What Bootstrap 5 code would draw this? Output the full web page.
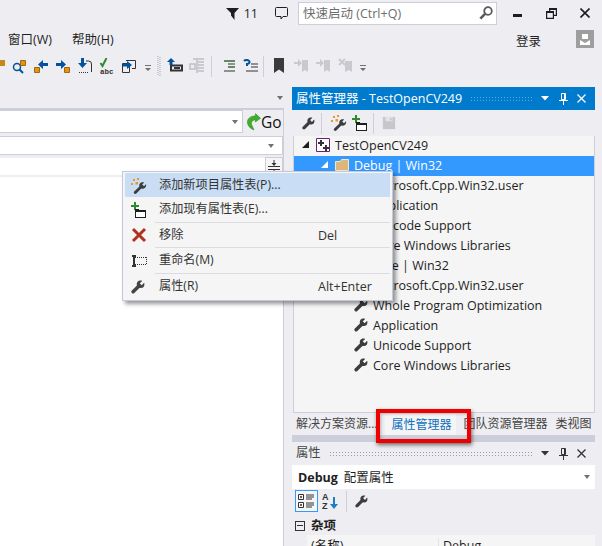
<!DOCTYPE html>
<html lang="zh">
<head>
<meta charset="utf-8">
<title>属性管理器</title>
<link href="https://cdn.jsdelivr.net/npm/bootstrap@5.3.0/dist/css/bootstrap.min.css" rel="stylesheet">
<style>
html,body{width:602px;height:546px;overflow:hidden;margin:0}
body{background:#eeeef2;color:#1e1e1e;font:12.5px/1.2 "Open Sans","Noto Sans CJK SC",sans-serif}
.vs-app{width:602px;height:546px;position:relative;overflow:hidden}
.vs-title{height:26px}
.vs-quick{width:199px;height:23px;background:#fff;border:1px solid #ccced8;color:#6d6d6d;padding:0 2px 0 4px;margin-left:9px;flex:none}
.vs-win{width:105px;padding-left:16px;gap:25px;flex:none}
.vs-win svg{flex:none}
.vs-win svg+svg{margin-left:-2px}
.vs-menu{height:26px;padding-left:8px}
.vs-menu span.mi{width:64px}
.vs-login{margin-left:auto;margin-right:35px;position:relative;top:2px}
.vs-avatar{width:18px;height:18px;background:#9e9e9e;margin-right:8px}
.vs-tools{height:33px;gap:6px;margin-left:-11px;padding-bottom:5px}
.vs-tools svg{flex:none;width:16px;height:16px}
.vs-tools svg.nar{width:6px;height:16px;margin-top:6px;margin-left:2px}
.vs-tools svg.grip{width:4px;height:20px}
.vs-tools svg.after-mark{margin-left:1px}
.vs-tools svg.last{margin-left:0}
.vs-sep{width:1px;height:21px;background:#cccedb;flex:none}
.vs-tools .s1{margin-right:3px}
.vs-tools .s2{margin-left:-2px;margin-right:1px}
.vs-main{height:461px}
.vs-left{width:292px;flex:none;position:relative}
.vs-right{width:303px;flex:none;margin-right:7px;padding-top:2px}
.vs-drop{height:23px;padding:2px 9px 0 0;justify-content:flex-end}
.vs-doc{width:284px;height:438px;background:#eeeef2;border-top:2px solid #cccedb;border-right:1px solid #cccedb}
.vs-row{height:23px;margin-bottom:3px}
.vs-combo{background:#fff;border:1px solid #cccedb;border-left:0}
.vs-go{width:40px;flex:none;padding-left:4px;font-size:15.5px;color:#111;line-height:20px}
.vs-go svg{flex:none}
.vs-row2{height:19px;margin-bottom:3px}
.vs-row3{height:17px;position:relative;padding-right:18px}
.vs-row3 .vs-w{background:#fff;height:17px}
.vs-split{position:absolute;right:0;top:-1px;width:18px;height:19px;border:1px solid #cccedb;background:#f5f5f5}
.vs-white{background:#fff;height:400px;border-top:2px solid #eeeeee}
.vs-arrow{width:0;height:0;border-left:3.5px solid transparent;border-right:3.5px solid transparent;border-top:4px solid #717171}
.vs-head{height:23px;background:#007acc;color:#fff;padding:0 5px 0 4px;font-size:12.5px}
.vs-dots{flex:1;height:5px;margin:0 8px;background-image:radial-gradient(#5aa9dd 0.7px,transparent .8px);background-size:3px 3px}
.vs-hchev{margin-right:10px}
.vs-hpin{margin-right:9px}
.vs-hx{margin-right:4px}
.vs-ptools{height:26px;padding-left:10px;gap:4px;background:#eeeef2}
.vs-ptools .m1{margin-left:2px}
.vs-ptools .m2{margin-left:5px}
.vs-ptools .m3{margin-left:1px}
.vs-ptools .m4{margin-left:4px}
.vs-tree{height:277px;background:#f5f5f5;border:solid #cccedb;border-width:0 1px 1px;font-size:12.5px;margin-left:1px}
.vs-node{height:20px;color:#1e1e1e;white-space:nowrap;padding-bottom:2px}
.vs-node svg{flex:none}
.vs-node .tw{width:14px;height:14px;margin-right:5px;color:#3c3c3c}
.vs-node .ta{margin-right:6px}
.vs-node .tb{margin-right:4px}
.vs-l0{padding-left:8px}
.vs-l1{padding-left:27px}
.vs-l2{padding-left:60px}
.vs-l1b{padding-left:60px}
.vs-node.sel{background:#3399ff;color:#fff}
.vs-tabs{height:22px;font-size:12px;color:#444;padding-left:4px}
.vs-tabs span{white-space:nowrap}
.vs-tab-on{color:#0e70c0;background:#f5f5f5;padding:0 6px;height:21px;line-height:21px;margin:0 7px 0 8px;width:71px;flex:none}
.vs-stripe{height:7px;background:#cccedb}
.vs-head2{height:23px;color:#444;padding:0 5px 0 4px;font-size:12.3px;background:#eeeef2}
.vs-head2 .vs-dots{background-image:radial-gradient(#9a9cab .7px,transparent .8px)}
.vs-pcombo{height:24px;background:#fff;padding:0 5px 0 6px;font-weight:700;font-size:12.5px;color:#1e1e1e}
.vs-pcombo em{font-style:normal;font-weight:400;margin-left:6px}
.vs-ptools2{height:24px;padding-left:3px;gap:4px}
.vs-boxed{width:23px;height:22px;border:1px solid #3399ff;background:#f5f5f5}
.vs-ptools2 .az{margin-left:0}
.vs-ptools2 .sp{margin:0 4px}
.vs-cat{height:22px;font-weight:700;padding:3px 0 0 3px;font-size:12.5px}
.vs-cat i{display:block;width:10px;height:10px;border:1px solid #333;position:relative;margin-right:6px}
.vs-cat i::after{content:"";position:absolute;left:1px;right:1px;top:3px;height:1px;background:#333}
.vs-grid{height:20px;background:#f5f5f5;margin-left:15px;color:#1e1e1e;padding-top:3px}
.vs-grid div:first-child{width:132px;border-right:1px solid #e2e2e2;padding-left:4px}
.vs-grid div+div{padding-left:4px}
.vs-ctx{position:absolute;left:122px;top:171px;width:271px;height:130px;background:#f5f5f5;border:1px solid #c5c7dc;box-shadow:3px 3px 4px rgba(0,0,0,.4);padding:1px 2px;font-size:12.2px;color:#333}
.vs-item{height:24px;padding:1px 0 0 6px;position:relative}
.vs-item.on{background:#c9def5}
.vs-item.short{height:23px}
.vs-item .ic{width:28px;flex:none;display:flex}
.vs-item .kb{position:absolute;left:193px;font-size:12.5px}
.vs-ctx hr{margin:1px 0 0 30px;border:0;border-top:1px solid #dcdce0;opacity:1}
.vs-red{position:absolute;left:376px;top:409px;width:95px;height:34px;border:4px solid #ee0000;box-shadow:1px 2px 4px rgba(0,0,0,.55),inset 1px 1px 3px rgba(0,0,0,.25)}
</style>
</head>
<body>
<svg width="0" height="0" class="position-absolute">
<defs>
<symbol id="wr" viewBox="0 0 16 16"><path fill="currentColor" d="M15 3.200 12.200 6 10 3.800 12.800 1C10.600.2 8 .9 7 2.800c-.6 1.100-.6 2.300-.2 3.400L1 12c-.8.800-.8 2 0 2.800s2 .8 2.800 0l5.800-5.800c1.700.6 3.600.2 4.800-1 1-1.200 1.200-3.300.6-4.800z"/></symbol>
<symbol id="wrs" viewBox="0 0 16 16"><path fill="#3c3c3c" d="M15 6.200 13 8.200 11.200 6.500 13.200 4.500c-1.800-.7-3.800-.1-4.600 1.500-.4.800-.5 1.700-.2 2.600L3.200 13.400c-.6.700-.6 1.500 0 2.100s1.500.6 2.100 0l5-5c1.300.5 2.900.1 3.800-.8.900-1 1.400-2.300.9-3.500z"/><path fill="#e69a2e" d="M2 1h2v2H2zM6 0h2v2H6zM0 5h2v2H0zM4.500 4H7v2.500H4.500z"/></symbol>
<symbol id="addp" viewBox="0 0 16 16"><path fill="#2f8a2f" d="M3 0h2v3h3v2H5v3H3V5H0V3h3z"/><path fill="#1e1e1e" d="M4 7h4v1h7v8H4zm1 3v5h9v-5z"/><path fill="#fff" d="M5 10h9v5H5z"/></symbol>
<symbol id="chev" viewBox="0 0 6 16"><path fill="#717171" d="M0 4h6v1H0zM0 7h6l-3 3z"/></symbol>
<symbol id="bl" viewBox="0 0 16 16"><path fill="#e8930c" stroke="#9a6a1a" d="M1.500 9.500h5v5h-5z"/><path fill="#00539c" d="M10 2v3h5v3h-5v3L5 6.500z"/></symbol>
<symbol id="br" viewBox="0 0 16 16"><path fill="#e8930c" stroke="#9a6a1a" d="M9.500 9.500h5v5h-5z"/><path fill="#00539c" d="M6 2v3H1v3h5v3l5-4.500z"/></symbol>
</defs>
</svg>
<div class="vs-app">
  <div class="vs-title d-flex justify-content-end align-items-center">
    <svg width="14" height="14" viewBox="0 0 14 14"><path fill="#1e1e1e" d="M0 2h13L8.500 7v7L5 9.500 5 7z"/></svg>
    <span class="ms-1 me-3">11</span>
    <svg width="15" height="15" viewBox="0 0 15 15"><path fill="none" stroke="#1e1e1e" d="M2.500 1.500h10a1 1 0 0 1 1 1v7a1 1 0 0 1-1 1H9l-2 2.500V10.500H2.500a1 1 0 0 1-1-1v-7a1 1 0 0 1 1-1z"/></svg>
    <div class="vs-quick d-flex align-items-center justify-content-between">
      <span>快速启动 (Ctrl+Q)</span>
      <svg width="16" height="16" viewBox="0 0 16 16"><circle cx="10" cy="6" r="3.800" fill="none" stroke="#5a5a5a" stroke-width="1.800"/><path stroke="#5a5a5a" stroke-width="2.600" d="m7.300 8.700-5 5"/></svg>
    </div>
    <div class="vs-win d-flex align-items-center">
      <svg width="10" height="10" viewBox="0 0 10 10"><path fill="#1e1e1e" d="M0 6h9v3H0z"/></svg>
      <svg width="11" height="11" viewBox="0 0 11 11"><path fill="none" stroke="#1e1e1e" stroke-width="1.200" d="M.6 3.600h6.800v6.800H.6zM3.600 3.500V.6h6.800v6.800H7.500"/><path stroke="#1e1e1e" stroke-width="1.500" d="M.6 4.300h6.800M3.600 1.300h6.800"/></svg>
      <svg width="10" height="10" viewBox="0 0 10 10"><path stroke="#1e1e1e" stroke-width="1.600" d="m.5.500 9 9m0-9-9 9"/></svg>
    </div>
  </div>
  <div class="vs-menu d-flex align-items-center">
    <span class="mi">窗口(W)</span><span class="mi">帮助(H)</span>
    <span class="vs-login">登录</span>
    <svg class="vs-avatar" viewBox="0 0 18 18"><path fill="#fff" d="M6 4h6v5H6zM4 10l5 3 5-3v5H4z"/></svg>
  </div>
  <div class="vs-tools d-flex align-items-center">
    <svg viewBox="0 0 16 16"><path fill="#c8861b" d="M8 2h8v6H8z"/></svg>
    <svg viewBox="0 0 16 16"><circle cx="6" cy="9" r="3.500" fill="none" stroke="#00539c" stroke-width="1.500"/><path stroke="#00539c" stroke-width="2" d="m8.500 11.500 3.500 3.500"/><path fill="#e8930c" stroke="#9a6a1a" d="M9.500 2.500h5v5h-5z"/></svg>
    <svg viewBox="0 0 16 16"><use href="#bl"/></svg>
    <svg viewBox="0 0 16 16"><use href="#br"/></svg>
    <svg viewBox="0 0 16 16"><path fill="#00539c" d="M4 0h3v5h3l-4.500 5L1 5h3z"/><path fill="none" stroke="#333" stroke-dasharray="1 1" d="M2 14.500h10"/><path fill="none" stroke="#333" d="M9 3h2.500a3 3 0 0 1 3 3v8"/></svg>
    <svg viewBox="0 0 16 16"><path fill="none" stroke="#2f8a2f" stroke-width="2" d="m1.500 5 2 3L7.500 0"/><text x="1" y="15.500" font-size="7.500" font-family="Liberation Mono" font-weight="700" fill="#333">abc</text></svg>
    <svg viewBox="0 0 16 16"><path fill="none" stroke="#333" d="M5 2.500h4l5.500 0v8H11M1.500 5.500h7v9h-7z"/><path fill="#00539c" d="M6 3v2.500H2v3h4V11l5-4z"/></svg>
    <svg class="nar"><use href="#chev"/></svg>
    <svg class="grip" viewBox="0 0 4 20"><path stroke="#a5a7b5" stroke-dasharray="1 1" d="M1 0v20M3 1v19"/></svg>
    <svg viewBox="0 0 16 16"><path fill="none" stroke="#333" stroke-width="2" d="M4 7.500h11v5H4z"/><path fill="#333" d="M7 9h6v2H7z"/><path fill="#00539c" d="M4 0 0 4h2.500v3h3V4H8z"/></svg>
    <svg viewBox="0 0 16 16"><path fill="none" stroke="#bdbdc4" stroke-width="1.500" d="M1 6h5v5H1zM4 1h11M9 4h6M9 7h6M9 10h6M9 13h6M8 2v13"/></svg>
    <span class="vs-sep s1"></span>
    <svg viewBox="0 0 16 16"><path fill="none" stroke="#333" d="M3 3h11M7 6h7M7 9h7M3 13h11"/><path stroke="#2f8a2f" d="M3 3h11M7 9h7"/></svg>
    <svg viewBox="0 0 16 16"><path fill="none" stroke="#333" d="M8 6h7M8 9h7M3 13h12"/><path fill="none" stroke="#00539c" stroke-width="2" d="M1 3a3 2 0 1 1 3 3v2"/></svg>
    <span class="vs-sep s2"></span>
    <svg viewBox="0 0 16 16"><path fill="#3a3a3a" d="M3 0h10v15l-5-3.500L3 15z"/></svg>
    <svg viewBox="0 0 16 16" class="after-mark"><path fill="#c9c9cf" d="M8 2h6v12l-3-2-3 2z"/><path fill="#c9c9cf" d="M0 4h4V1l4 4-4 4V6H0z"/></svg>
    <svg viewBox="0 0 16 16"><path fill="#c9c9cf" d="M8 2h6v12l-3-2-3 2z"/><path fill="#c9c9cf" d="M0 4h4V1l4 4-4 4V6H0z"/></svg>
    <svg viewBox="0 0 16 16"><path fill="#c9c9cf" d="M7 3h7v11l-3-2-4 2z"/><path stroke="#c9c9cf" stroke-width="2" d="m1 1 6 6m0-6-6 6"/></svg>
    <svg class="nar last"><use href="#chev"/></svg>
  </div>
  <div class="vs-main d-flex">
    <div class="vs-left">
      <div class="vs-drop d-flex align-items-center"><span class="vs-arrow"></span></div>
      <div class="vs-doc">
        <div class="vs-row d-flex">
          <div class="vs-combo flex-grow-1 d-flex align-items-center justify-content-end pe-1"><span class="vs-arrow"></span></div>
          <div class="vs-go d-flex align-items-center">
            <svg width="14" height="20" viewBox="0 0 15 20"><path fill="#3fae2a" stroke="#2b8a1c" stroke-width=".6" d="M9 1l5.500 5L9 10V7.500C5.500 8 4 10 5 13l2.500 5.500C3 17 .5 13.500.5 10 .5 6 4 3.500 9 3.500z"/></svg>
            <span>Go</span>
          </div>
        </div>
        <div class="vs-row2"><div class="vs-combo h-100 d-flex align-items-center justify-content-end pe-2"><span class="vs-arrow"></span></div></div>
        <div class="vs-row3"><div class="vs-w"></div>
          <div class="vs-split d-flex align-items-center justify-content-center">
            <svg width="12" height="14" viewBox="0 0 12 14"><path stroke="#333" d="M0 6.500h12M0 9.500h12M6 0v4M6 12v2"/><path fill="#333" d="M3.500 3h5L6 6zM3.500 13h5L6 10z"/></svg>
          </div>
        </div>
        <div class="vs-white"></div>
      </div>
    </div>
    <div class="vs-right">
      <div class="vs-head d-flex align-items-center">
        <span class="text-nowrap">属性管理器 - TestOpenCV249</span>
        <span class="vs-dots"></span>
        <svg width="8" height="5" viewBox="0 0 8 5" class="vs-hchev"><path fill="#fff" d="M0 0h8L4 4.500z"/></svg>
        <svg width="9" height="12" viewBox="0 0 9 12" class="vs-hpin"><path fill="none" stroke="#fff" d="M2.500.5h4v6h-4z"/><path stroke="#fff" d="M0 7.500h9M4.500 8v4M5.500 1v5"/></svg>
        <svg width="9" height="9" viewBox="0 0 9 9" class="vs-hx"><path stroke="#fff" stroke-width="1.300" d="m.5.500 8 8m0-8-8 8"/></svg>
      </div>
      <div class="vs-ptools d-flex align-items-center">
        <svg width="13" height="13" color="#3c3c3c"><use href="#wr"/></svg>
        <span class="vs-sep m1"></span>
        <svg width="16" height="16" class="m2"><use href="#wrs"/></svg>
        <svg width="16" height="16" class="m3"><use href="#addp"/></svg>
        <span class="vs-sep m3"></span>
        <svg width="14" height="14" viewBox="0 0 16 16" class="m4"><path fill="#c6c6cb" d="M1 1h14v14H1z"/><path fill="#e4e4e8" d="M4 1h8v5H4z"/><path fill="#c6c6cb" d="M9 2h2v3H9z"/></svg>
      </div>
      <div class="vs-tree">
        <div class="vs-node vs-l0 d-flex align-items-center">
          <svg width="8" height="8" viewBox="0 0 8 8" class="ta"><path fill="#1e1e1e" d="M7 0v7H0z"/></svg>
          <svg width="15" height="15" viewBox="0 0 15 15" class="tb"><path fill="#fff" stroke="#68217a" d="M.5.500h13v13H.5z"/><path fill="#333" d="M2 4h2V2h2v2h2v2H6v2H4V6H2zM7 9h2V7h2v2h2v2h-2v2H9v-2H7z"/></svg>
          <span>TestOpenCV249</span>
        </div>
        <div class="vs-node sel vs-l1 d-flex align-items-center">
          <svg width="8" height="8" viewBox="0 0 8 8" class="ta"><path fill="#fff" d="M7 0v7H0z"/></svg>
          <svg width="15" height="14" viewBox="0 0 15 14" class="tb"><path fill="#dcb67a" stroke="#f3e6c9" d="M.5 3.500h5l1-2h7v11H.5z"/></svg>
          <span>Debug | Win32</span>
        </div>
        <div class="vs-node vs-l2 d-flex align-items-center"><svg class="tw"><use href="#wr"/></svg>Microsoft.Cpp.Win32.user</div>
        <div class="vs-node vs-l2 d-flex align-items-center"><svg class="tw"><use href="#wr"/></svg>Application</div>
        <div class="vs-node vs-l2 d-flex align-items-center"><svg class="tw"><use href="#wr"/></svg>Unicode Support</div>
        <div class="vs-node vs-l2 d-flex align-items-center"><svg class="tw"><use href="#wr"/></svg>Core Windows Libraries</div>
        <div class="vs-node vs-l1b d-flex align-items-center">Release | Win32</div>
        <div class="vs-node vs-l2 d-flex align-items-center"><svg class="tw"><use href="#wr"/></svg>Microsoft.Cpp.Win32.user</div>
        <div class="vs-node vs-l2 d-flex align-items-center"><svg class="tw"><use href="#wr"/></svg>Whole Program Optimization</div>
        <div class="vs-node vs-l2 d-flex align-items-center"><svg class="tw"><use href="#wr"/></svg>Application</div>
        <div class="vs-node vs-l2 d-flex align-items-center"><svg class="tw"><use href="#wr"/></svg>Unicode Support</div>
        <div class="vs-node vs-l2 d-flex align-items-center"><svg class="tw"><use href="#wr"/></svg>Core Windows Libraries</div>
      </div>
      <div class="vs-tabs d-flex align-items-center">
        <span>解决方案资源...</span>
        <span class="vs-tab-on">属性管理器</span>
        <span>团队资源管理器</span>
        <span class="ms-2">类视图</span>
      </div>
      <div class="vs-stripe"></div>
      <div class="vs-head2 d-flex align-items-center">
        <span>属性</span>
        <span class="vs-dots"></span>
        <svg width="8" height="5" viewBox="0 0 8 5" class="vs-hchev"><path fill="#333" d="M0 0h8L4 4.500z"/></svg>
        <svg width="9" height="12" viewBox="0 0 9 12" class="vs-hpin"><path fill="none" stroke="#333" d="M2.500.5h4v6h-4z"/><path stroke="#333" d="M0 7.500h9M4.500 8v4M5.500 1v5"/></svg>
        <svg width="9" height="9" viewBox="0 0 9 9" class="vs-hx"><path stroke="#333" stroke-width="1.300" d="m.5.500 8 8m0-8-8 8"/></svg>
      </div>
      <div class="vs-pcombo d-flex align-items-center justify-content-between">
        <span>Debug<em>配置属性</em></span><span class="vs-arrow"></span>
      </div>
      <div class="vs-ptools2 d-flex align-items-center">
        <span class="vs-boxed d-flex align-items-center justify-content-center">
          <svg width="17" height="16" viewBox="0 0 17 16"><path fill="none" stroke="#333" d="M.5 1.500h5v5h-5zM.5 9.500h5v5h-5zM8 2h8M8 4h8M8 6h6M8 10h8M8 12h8M8 14h6M2 4h2M2 12h2M3 11v2M3 3v2"/></svg>
        </span>
        <svg width="16" height="18" viewBox="0 0 16 18" class="az"><text x="0" y="8" font-size="9" font-weight="700" font-family="Liberation Sans" fill="#333">A</text><text x="0" y="17" font-size="9" font-weight="700" font-family="Liberation Sans" fill="#333">Z</text><path fill="#1c7ec4" d="M11 5h2v7h3l-4 5-4-5h3z"/></svg>
        <span class="vs-sep sp"></span>
        <svg width="13" height="13" color="#3c3c3c"><use href="#wr"/></svg>
      </div>
      <div class="vs-cat d-flex align-items-center"><i></i>杂项</div>
      <div class="vs-grid d-flex"><div>(名称)</div><div>Debug</div></div>
    </div>
  </div>

  <div class="vs-ctx">
    <div class="vs-item on d-flex align-items-center"><span class="ic"><svg width="16" height="16"><use href="#wrs"/></svg></span>添加新项目属性表(P)...</div>
    <div class="vs-item d-flex align-items-center"><span class="ic"><svg width="16" height="16"><use href="#addp"/></svg></span>添加现有属性表(E)...</div>
    <hr>
    <div class="vs-item short d-flex align-items-center"><span class="ic"><svg width="16" height="16" viewBox="0 0 16 16"><path stroke="#b0321e" stroke-width="3" d="m2 2 12 12m0-12L2 14"/></svg></span>移除<span class="kb">Del</span></div>
    <hr>
    <div class="vs-item d-flex align-items-center"><span class="ic"><svg width="16" height="16" viewBox="0 0 16 16"><path fill="none" stroke="#333" stroke-dasharray="1 1" d="M4 4.500h12M4 11.500h12M15.500 4v8"/><path fill="#333" d="M1 2h4v2H4v8h1v2H1v-2h1V4H1z"/></svg></span>重命名(M)</div>
    <hr>
    <div class="vs-item d-flex align-items-center"><span class="ic"><svg width="14" height="14" color="#444"><use href="#wr"/></svg></span>属性(R)<span class="kb">Alt+Enter</span></div>
  </div>
  <div class="vs-red"></div>
</div>
<script src="https://cdn.jsdelivr.net/npm/bootstrap@5.3.0/dist/js/bootstrap.bundle.min.js"></script>
</body>
</html>
